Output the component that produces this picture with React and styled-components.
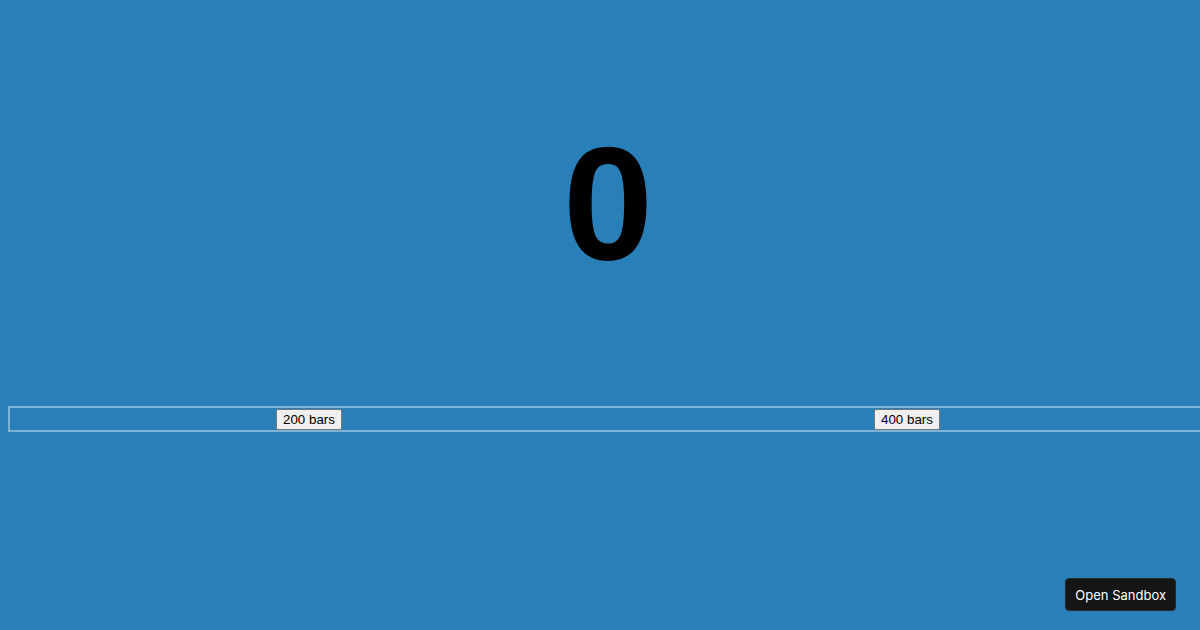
import styled, { createGlobalStyle } from 'styled-components';

const GlobalStyle = createGlobalStyle`
	body {
		margin: 8px 0 8px 8px;
		background-color: #2980b9;
		font-family: 'Liberation Sans', Arial, sans-serif;
	}
	#root {
		overflow: visible;
	}
`;

const App = () => {
	const counter = 0;
	const options = [200, 400];

	return (
		<>
			<GlobalStyle />
			<Page>
				<Counter>{counter}</Counter>
				<Controls>
					{options.map(count => (
						<Slot key={count}>
							<BarsButton type='button'>{count} bars</BarsButton>
						</Slot>
					))}
				</Controls>
			</Page>
			<SandboxButton type='button'>Open Sandbox</SandboxButton>
		</>
	);
};

export default App;

const Page = styled.div`
	width: 100vw;
`;

const Counter = styled.div`
	box-sizing: border-box;
	height: 398px;
	padding-bottom: 8px;
	display: flex;
	align-items: center;
	justify-content: center;
	font-family: 'Liberation Sans', Arial, sans-serif;
	font-weight: 700;
	font-size: 162px;
	color: #000;
`;

const Controls = styled.div`
	display: flex;
	height: 22px;
	border: 2px solid rgba(255, 255, 255, 0.4);
`;

const Slot = styled.div`
	flex: 1;
	display: flex;
	align-items: center;
	justify-content: center;
`;

const BarsButton = styled.button`
	font-family: 'Liberation Sans', Arial, sans-serif;
	font-size: 13.333px;
	line-height: 17px;
	padding: 1px 6px;
	color: #000;
	background-color: #efefef;
	border: 1px solid #767676;
	border-radius: 2px;
	cursor: pointer;
`;

const SandboxButton = styled.button`
	position: fixed;
	right: 24px;
	bottom: 19px;
	height: 33px;
	padding: 0 9px;
	font-family: Inter, 'Liberation Sans', sans-serif;
	font-size: 13px;
	color: #fff;
	background-color: #151515;
	border: 1px solid #2a2a2a;
	border-radius: 4px;
	cursor: pointer;
`;
